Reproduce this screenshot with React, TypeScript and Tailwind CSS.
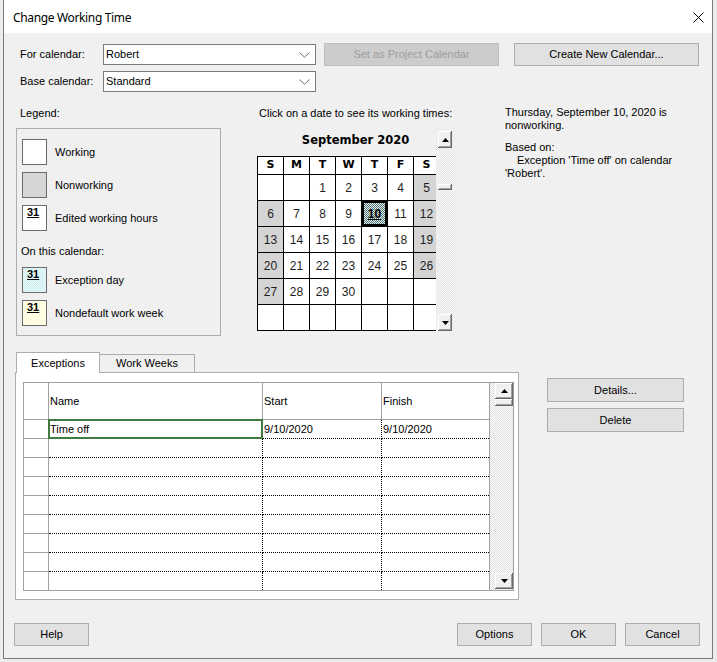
import React from "react";

const TRACK =
  "bg-[image:repeating-conic-gradient(#e2e2e2_0_25%,#fbfbfb_0_50%)] bg-[length:2px_2px]";

function Btn({ label, cls, disabled }: { label: string; cls: string; disabled?: boolean }) {
  return (
    <div
      className={`${cls} flex items-center justify-center border text-[11px] ${
        disabled
          ? "bg-[#cccccc] border-[#bfbfbf] text-[#9d9d9d]"
          : "bg-[#e1e1e1] border-[#adadad] text-black"
      }`}
    >
      {label}
    </div>
  );
}

function Select({ value }: { value: string }) {
  return (
    <div className="w-[213px] h-[21px] bg-white border border-[#7a7a7a] flex items-center pl-[2px] pr-[5px]">
      <span className="flex-1 text-[11px] leading-none">{value}</span>
      <svg width="11" height="6" viewBox="0 0 11 6">
        <path d="M0.5 0.5 L5.5 5.2 L10.5 0.5" fill="none" stroke="#707070" strokeWidth="1" />
      </svg>
    </div>
  );
}

function ScrollBtn({ dir, cls }: { dir?: "up" | "down"; cls: string }) {
  return (
    <div
      className={`${cls} bg-[#f0f0f0] shadow-[inset_-1px_-1px_0_#696969,inset_1px_1px_0_#ffffff,inset_-2px_-2px_0_#a0a0a0] flex items-center justify-center shrink-0`}
    >
      {dir && (
        <svg width="7" height="4" viewBox="0 0 7 4">
          {dir === "up" ? (
            <path d="M3.5 0 L7 4 L0 4 Z" fill="#000" />
          ) : (
            <path d="M0 0 L7 0 L3.5 4 Z" fill="#000" />
          )}
        </svg>
      )}
    </div>
  );
}

function Sq({ bg, num }: { bg: string; num?: boolean }) {
  return (
    <div className={`w-[25px] h-[26px] border border-[#6b6b6b] ${bg} pl-[4px] shrink-0`}>
      {num && (
        <span className="block text-[11px] font-bold underline leading-[13px] text-black">31</span>
      )}
    </div>
  );
}

function LegendItem({ bg, num, label }: { bg: string; num?: boolean; label: string }) {
  return (
    <div className="flex items-center">
      <Sq bg={bg} num={num} />
      <span className="ml-[8px] text-[11px]">{label}</span>
    </div>
  );
}

export default function App() {
  const weeks: (number | null)[][] = [
    [null, null, 1, 2, 3, 4, 5],
    [6, 7, 8, 9, 10, 11, 12],
    [13, 14, 15, 16, 17, 18, 19],
    [20, 21, 22, 23, 24, 25, 26],
    [27, 28, 29, 30, null, null, null],
    [null, null, null, null, null, null, null],
  ];
  const days = ["S", "M", "T", "W", "T", "F", "S"];

  return (
    <div className="w-[717px] h-[662px] bg-[#ececec] pl-[3px] font-['Liberation_Sans',Arial,sans-serif] text-black">
      <div className="w-[710px] h-[659px] border-x border-b border-[#7a7a7a] flex flex-col bg-[#f0f0f0]">
        {/* Title bar */}
        <div className="h-[33px] bg-white flex items-center shrink-0">
          <span className="ml-[9px] pt-[3px] text-[12px] font-['Noto_Sans',sans-serif] tracking-[-0.35px]">
            Change Working Time
          </span>
          <svg className="ml-auto mr-[8px] mt-[1px]" width="11" height="11" viewBox="0 0 11 11">
            <path d="M0.5 0.5 L10.5 10.5 M10.5 0.5 L0.5 10.5" stroke="#000" strokeWidth="1" />
          </svg>
        </div>

        {/* Calendar selection rows */}
        <div className="flex items-center h-[23px] mt-[10px] ml-[16px]">
          <span className="w-[83px] text-[11px]">For calendar:</span>
          <Select value="Robert" />
          <div className="ml-[8px]">
            <Btn label="Set as Project Calendar" cls="w-[175px] h-[23px]" disabled />
          </div>
          <div className="ml-[15px]">
            <Btn label="Create New Calendar..." cls="w-[185px] h-[23px]" />
          </div>
        </div>
        <div className="flex items-center h-[23px] mt-[4px] ml-[16px]">
          <span className="w-[83px] text-[11px]">Base calendar:</span>
          <Select value="Standard" />
        </div>

        {/* Middle section */}
        <div className="flex mt-[13px] ml-[12px]">
          {/* Legend */}
          <div className="w-[205px]">
            <div className="text-[11px] leading-[14px] pl-[4px]">Legend:</div>
            <div className="mt-[8px] h-[208px] border border-[#adadad] pl-[5px] pt-[10px] flex flex-col">
              <div className="flex flex-col gap-[7px]">
                <LegendItem bg="bg-white" label="Working" />
                <LegendItem bg="bg-[#d6d6d6]" label="Nonworking" />
                <LegendItem bg="bg-white" num label="Edited working hours" />
              </div>
              <div className="mt-[13px] -ml-[1px] text-[11px] leading-[14px]">On this calendar:</div>
              <div className="mt-[9px] flex flex-col gap-[7px]">
                <LegendItem
                  bg="bg-[image:repeating-conic-gradient(#cdeef0_0_25%,#eafafa_0_50%)] bg-[length:2px_2px]"
                  num
                  label="Exception day"
                />
                <LegendItem bg="bg-[#fffde2]" num label="Nondefault work week" />
              </div>
            </div>
          </div>

          {/* Calendar */}
          <div className="ml-[36px] w-[197px]">
            <div className="text-[11px] leading-[14px] pl-[2px] whitespace-nowrap">
              Click on a date to see its working times:
            </div>
            <div className="mt-[8px] relative">
              <div className="h-[28px] pt-[5px] text-center font-['DejaVu_Sans',sans-serif] font-bold text-[11.5px] leading-[15px]">
                September 2020
              </div>
              <div className="w-[179px] overflow-hidden">
                <div className="w-[183px] bg-black p-px grid grid-cols-[repeat(7,25px)] grid-rows-[17px_repeat(6,25px)] gap-px">
                  {days.map((d, i) => (
                    <div
                      key={"h" + i}
                      className="bg-white flex items-center justify-center font-['DejaVu_Sans',sans-serif] font-bold text-[11px]"
                    >
                      {d}
                    </div>
                  ))}
                  {weeks.map((w, r) =>
                    w.map((n, c) => {
                      if (n === 10) {
                        return (
                          <div
                            key={r + "-" + c}
                            className="bg-[image:repeating-conic-gradient(#557878_0_25%,#e2ecec_0_50%)] bg-[length:2px_2px] shadow-[inset_0_0_0_2px_#000] flex items-center justify-center text-[12px] font-bold underline"
                          >
                            10
                          </div>
                        );
                      }
                      const weekend = n !== null && (c === 0 || c === 6);
                      return (
                        <div
                          key={r + "-" + c}
                          className={`${weekend ? "bg-[#d4d4d4]" : "bg-white"} flex items-center justify-center text-[12px] text-[#1e1e1e]`}
                        >
                          {n ?? ""}
                        </div>
                      );
                    })
                  )}
                </div>
              </div>
              <div className={`absolute right-0 top-0 w-[18px] h-[203px] ${TRACK} flex flex-col px-[2px]`}>
                <ScrollBtn dir="up" cls="mt-[3px] h-[17px] w-[14px]" />
                <ScrollBtn cls="mt-[36px] h-[6px] w-[14px]" />
                <ScrollBtn dir="down" cls="mt-auto h-[17px] w-[14px]" />
              </div>
            </div>
          </div>

          {/* Info text */}
          <div className="ml-[51px] text-[11px] leading-[13px] whitespace-nowrap">
            <div>Thursday, September 10, 2020 is</div>
            <div>nonworking.</div>
            <div className="mt-[9px]">Based on:</div>
            <div className="pl-[12px]">Exception 'Time off' on calendar</div>
            <div>'Robert'.</div>
          </div>
        </div>

        {/* Tabs section */}
        <div className="flex mt-[16px]">
          <div className="ml-[11px] w-[504px]">
            <div className="flex items-end h-[20px] pl-[1px]">
              <div className="relative z-10 w-[84px] h-[21px] -mb-px bg-white border-t border-l border-r border-[#adadad] flex items-center justify-center text-[11px]">
                Exceptions
              </div>
              <div className="w-[95px] h-[18px] bg-[#f0f0f0] border-t border-r border-[#adadad] flex items-center justify-center text-[11px]">
                Work Weeks
              </div>
            </div>
            <div className="h-[228px] bg-white border border-[#adadad] pl-[7px] pt-[9px]">
              <div className="w-[491px] h-[209px] border border-[#a0a0a0] flex">
                <div className="w-[466px] border-r border-[#a0a0a0] flex flex-col">
                  <div className="flex h-[37px] border-b border-[#a0a0a0] text-[11px] shrink-0">
                    <div className="w-[25px] border-r border-[#a0a0a0]" />
                    <div className="w-[214px] border-r border-[#a0a0a0] flex items-center pl-[1px]">Name</div>
                    <div className="w-[119px] border-r border-[#a0a0a0] flex items-center pl-[1px]">Start</div>
                    <div className="flex-1 flex items-center pl-[1px]">Finish</div>
                  </div>
                  {Array.from({ length: 9 }).map((_, i) => {
                    const last = i === 8;
                    const first = i === 0;
                    return (
                      <div key={i} className={`relative flex ${last ? "h-[18px]" : "h-[19px]"} text-[11px] shrink-0`}>
                        <div className={`w-[25px] border-r border-[#a0a0a0] ${last ? "" : "border-b"}`} />
                        <div className={`w-[214px] border-r border-dotted border-black flex items-center pl-[1px] ${last ? "" : "border-b"}`}>
                          {first ? "Time off" : ""}
                        </div>
                        <div className={`w-[119px] border-r border-dotted border-black flex items-center pl-[1px] ${last ? "" : "border-b"}`}>
                          {first ? "9/10/2020" : ""}
                        </div>
                        <div className={`flex-1 border-dotted border-black flex items-center pl-[1px] ${last ? "" : "border-b"}`}>
                          {first ? "9/10/2020" : ""}
                        </div>
                        {first && (
                          <div className="absolute left-[24px] top-[-1px] w-[215px] h-[20px] border-2 border-[#3f7a3f]" />
                        )}
                      </div>
                    );
                  })}
                </div>
                <div className={`w-[23px] ${TRACK} flex flex-col items-end`}>
                  <ScrollBtn dir="up" cls="h-[16px] w-[18px]" />
                  <ScrollBtn cls="h-[7px] w-[18px]" />
                  <ScrollBtn dir="down" cls="mt-auto mb-[1px] h-[16px] w-[18px]" />
                </div>
              </div>
            </div>
          </div>
          <div className="ml-[28px] mt-[26px] flex flex-col gap-[6px]">
            <Btn label="Details..." cls="w-[137px] h-[24px]" />
            <Btn label="Delete" cls="w-[137px] h-[24px]" />
          </div>
        </div>

        {/* Bottom buttons */}
        <div className="flex mt-[23px] pl-[10px] pr-[12px]">
          <Btn label="Help" cls="w-[75px] h-[23px]" />
          <div className="ml-auto flex gap-[9px]">
            <Btn label="Options" cls="w-[75px] h-[23px]" />
            <Btn label="OK" cls="w-[75px] h-[23px]" />
            <Btn label="Cancel" cls="w-[75px] h-[23px]" />
          </div>
        </div>
      </div>
    </div>
  );
}
